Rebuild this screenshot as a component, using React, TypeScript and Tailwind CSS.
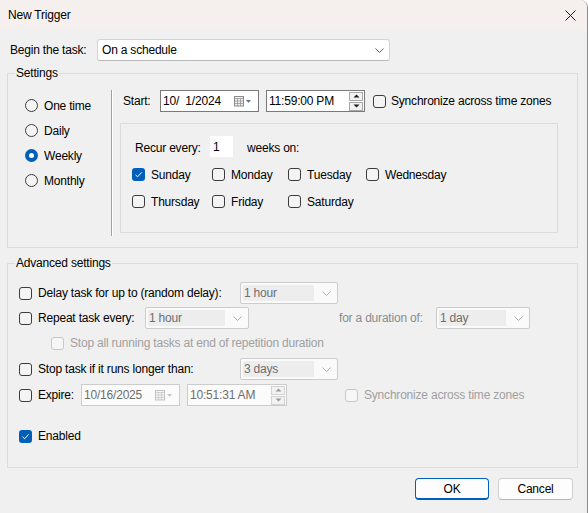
import React from 'react';

function Check({ checked = false, disabled = false }: { checked?: boolean; disabled?: boolean }) {
  if (checked) {
    return (
      <span className="w-[13px] h-[13px] rounded-[3px] bg-[#005fb8] flex items-center justify-center shrink-0">
        <svg width="13" height="13" viewBox="0 0 13 13">
          <path d="M3.5 6.8 L5.6 8.8 L9.6 4.4" fill="none" stroke="#ffffff" strokeWidth="1" />
        </svg>
      </span>
    );
  }
  return (
    <span
      className={
        disabled
          ? 'w-[13px] h-[13px] rounded-[3px] border border-[#c8c8c8] bg-[#f6f6f6] shrink-0'
          : 'w-[13px] h-[13px] rounded-[3px] border border-[#3c3c3c] bg-[#f4f4f4] shrink-0'
      }
    />
  );
}

function Radio({ checked = false }: { checked?: boolean }) {
  if (checked) {
    return (
      <span className="w-[13px] h-[13px] rounded-full bg-[#005fb8] flex items-center justify-center shrink-0">
        <span className="w-[5px] h-[5px] rounded-full bg-white" />
      </span>
    );
  }
  return <span className="w-[13px] h-[13px] rounded-full border border-[#3c3c3c] bg-[#f4f4f4] shrink-0" />;
}

function Chevron({ color }: { color: string }) {
  return (
    <svg width="9" height="5" viewBox="0 0 9 5" className="shrink-0">
      <path d="M0.5 0.5 L4.5 4.5 L8.5 0.5" fill="none" stroke={color} strokeWidth="1" />
    </svg>
  );
}

function OffCombo({ value, w }: { value: string; w: string }) {
  return (
    <div className={`${w} h-[22px] border border-[#cccccc] rounded-[2px] bg-[#fafafa] flex items-center p-[2px] gap-[8px]`}>
      <span className="flex-1 h-full bg-[#ededed] text-[#6e6e6e] pl-[1px] flex items-center">{value}</span>
      <span className="pr-[4px]">
        <Chevron color="#b0b0b0" />
      </span>
    </div>
  );
}

function CalIcon({ off = false }: { off?: boolean }) {
  const c = off ? '#c4c4c4' : '#8a8a8a';
  return (
    <svg width="20" height="11" viewBox="0 0 20 11" className="shrink-0">
      <rect x="0.5" y="0.5" width="9" height="9.5" fill={off ? '#f4f4f4' : '#f2f2f2'} stroke={c} />
      <path d="M0.5 2.5 H9.5 M3.5 2.5 V10 M6.5 2.5 V10 M0.5 5 H9.5 M0.5 7.5 H9.5" stroke={c} strokeWidth="0.7" />
      <path d="M12 4 H17 L14.5 6.8 Z" fill={off ? '#c4c4c4' : '#5a6f8a'} />
    </svg>
  );
}

function Spin({ off = false }: { off?: boolean }) {
  const b = off ? 'border-[#d2d2d2]' : 'border-[#a8a8a8]';
  const t = off ? '#9a9a9a' : '#1a1a1a';
  return (
    <div className="flex flex-col gap-[1px] shrink-0">
      <span className={`w-[14px] h-[9px] border ${b} bg-[#f2f2f2] flex items-center justify-center`}>
        <svg width="7" height="4" viewBox="0 0 7 4">
          <path d="M0.5 3.5 L3.5 0.5 L6.5 3.5 Z" fill={t} />
        </svg>
      </span>
      <span className={`w-[14px] h-[9px] border ${b} bg-[#f2f2f2] flex items-center justify-center`}>
        <svg width="7" height="4" viewBox="0 0 7 4">
          <path d="M0.5 0.5 L3.5 3.5 L6.5 0.5 Z" fill={t} />
        </svg>
      </span>
    </div>
  );
}

export default function App() {
  return (
    <div className="w-[588px] h-[513px] bg-[#f0f0f0] flex flex-col font-['Liberation_Sans',Arial,sans-serif] text-[12px] leading-[16px] tracking-[-0.2px] text-black overflow-hidden rounded-tr-[8px] border-r border-[#8a8a8a]">
      {/* title bar */}
      <div className="h-[30px] bg-[#f5f0ee] flex items-center justify-between pl-[8px] pr-[11px] shrink-0">
        <span className="text-[12px]">New Trigger</span>
        <svg width="11" height="11" viewBox="0 0 11 11">
          <path d="M0.5 0.5 L10.5 10.5 M10.5 0.5 L0.5 10.5" stroke="#1a1a1a" strokeWidth="1" />
        </svg>
      </div>

      <div className="pl-[7px] pr-[9px] flex flex-col">
        {/* begin the task */}
        <div className="mt-[9px] h-[22px] flex items-center pl-[3px]">
          <span className="w-[87px]">Begin the task:</span>
          <div className="w-[293px] h-[22px] bg-white border border-[#d4d4d4] border-b-[#b8b8b8] rounded-[3px] flex items-center justify-between pl-[4px] pr-[5px]">
            <span>On a schedule</span>
            <Chevron color="#606060" />
          </div>
        </div>

        {/* Settings */}
        <fieldset className="mt-[4px] border border-[#dcdcdc] min-w-0">
          <legend className="ml-[7px] px-[1px] leading-[16px]">Settings</legend>
          <div className="flex pt-[9px] pb-[11px]">
            <div className="w-[103px] flex flex-col pt-[3px] pl-[17px]">
              <label className="h-[25px] flex items-center gap-[6px]">
                <Radio />
                <span>One time</span>
              </label>
              <label className="h-[25px] flex items-center gap-[6px]">
                <Radio />
                <span>Daily</span>
              </label>
              <label className="h-[25px] flex items-center gap-[6px]">
                <Radio checked />
                <span>Weekly</span>
              </label>
              <label className="h-[25px] flex items-center gap-[6px]">
                <Radio />
                <span>Monthly</span>
              </label>
            </div>
            <div className="w-[2px] border-l border-[#a0a0a0] bg-white" />
            <div className="flex flex-col pl-[7px] pb-[3px]">
              <div className="h-[22px] flex items-center pl-[3px]">
                <span className="w-[37px]">Start:</span>
                <div className="w-[99px] h-[22px] bg-white border border-[#7a7a7a] flex items-center justify-between pl-[2px] pr-[4px]">
                  <span>10/&nbsp;&nbsp;1/2024</span>
                  <CalIcon />
                </div>
                <div className="ml-[7px] w-[99px] h-[22px] bg-white border border-[#7a7a7a] flex items-center justify-between pl-[2px] pr-[1px]">
                  <span>11:59:00 PM</span>
                  <Spin />
                </div>
                <label className="ml-[8px] flex items-center gap-[5px]">
                  <Check />
                  <span>Synchronize across time zones</span>
                </label>
              </div>

              <div className="mt-[11px] w-[438px] h-[110px] border border-[#dcdcdc] flex flex-col">
                <div className="mt-[12px] pl-[14px] h-[21px] flex items-center">
                  <span className="w-[75px] pt-[3px]">Recur every:</span>
                  <span className="w-[23px] h-[21px] bg-white pl-[3px] flex items-center">1</span>
                  <span className="ml-[14px] pt-[3px]">weeks on:</span>
                </div>
                <div className="mt-[4px] pl-[11px] grid grid-cols-[80px_76px_78px_1fr]">
                  <label className="h-[27px] flex items-center gap-[6px]">
                    <Check checked />
                    <span>Sunday</span>
                  </label>
                  <label className="h-[27px] flex items-center gap-[6px]">
                    <Check />
                    <span>Monday</span>
                  </label>
                  <label className="h-[27px] flex items-center gap-[6px]">
                    <Check />
                    <span>Tuesday</span>
                  </label>
                  <label className="h-[27px] flex items-center gap-[6px]">
                    <Check />
                    <span>Wednesday</span>
                  </label>
                  <label className="h-[27px] flex items-center gap-[6px]">
                    <Check />
                    <span>Thursday</span>
                  </label>
                  <label className="h-[27px] flex items-center gap-[6px]">
                    <Check />
                    <span>Friday</span>
                  </label>
                  <label className="h-[27px] flex items-center gap-[6px]">
                    <Check />
                    <span>Saturday</span>
                  </label>
                </div>
              </div>
            </div>
          </div>
        </fieldset>

        {/* Advanced settings */}
        <fieldset className="mt-[7px] border border-[#dcdcdc] min-w-0">
          <legend className="ml-[7px] px-[1px] leading-[16px]">Advanced settings</legend>
          <div className="flex flex-col pt-[11px] pl-[11px] pb-[20px]">
            <div className="h-[22px] flex items-center">
              <Check />
              <span className="ml-[6px] w-[202px]">Delay task for up to (random delay):</span>
              <OffCombo value="1 hour" w="w-[98px]" />
            </div>
            <div className="mt-[3px] h-[22px] flex items-center">
              <Check />
              <span className="ml-[6px] w-[107px]">Repeat task every:</span>
              <OffCombo value="1 hour" w="w-[104px]" />
              <span className="ml-[90px] w-[97px] text-[#8c8c8c]">for a duration of:</span>
              <OffCombo value="1 day" w="w-[94px]" />
            </div>
            <div className="mt-[3px] h-[22px] flex items-center pl-[32px]">
              <Check disabled />
              <span className="ml-[6px] text-[#a0a0a0]">Stop all running tasks at end of repetition duration</span>
            </div>
            <div className="mt-[4px] h-[22px] flex items-center">
              <Check />
              <span className="ml-[6px] w-[202px]">Stop task if it runs longer than:</span>
              <OffCombo value="3 days" w="w-[98px]" />
            </div>
            <div className="mt-[4px] h-[22px] flex items-center">
              <Check />
              <span className="ml-[6px] w-[43px]">Expire:</span>
              <div className="w-[99px] h-[22px] bg-[#fbfbfb] border border-[#cccccc] flex items-center justify-between pl-[2px] pr-[4px]">
                <span className="text-[#6e6e6e]">10/16/2025</span>
                <CalIcon off />
              </div>
              <div className="ml-[7px] w-[100px] h-[22px] bg-[#fbfbfb] border border-[#cccccc] flex items-center justify-between pl-[2px] pr-[1px]">
                <span className="text-[#6e6e6e]">10:51:31 AM</span>
                <Spin off />
              </div>
              <label className="ml-[58px] flex items-center gap-[6px]">
                <Check disabled />
                <span className="text-[#a0a0a0]">Synchronize across time zones</span>
              </label>
            </div>
            <div className="mt-[19px] h-[22px] flex items-center">
              <Check checked />
              <span className="ml-[6px]">Enabled</span>
            </div>
          </div>
        </fieldset>

        {/* buttons */}
        <div className="mt-[10px] flex justify-end gap-[9px] pr-[5px]">
          <button className="w-[74px] h-[22px] rounded-[4px] bg-[#fdfdfd] border border-[#005fb8] border-b-[2px] text-center">
            OK
          </button>
          <button className="w-[75px] h-[22px] rounded-[4px] bg-[#fdfdfd] border border-[#d0d0d0] border-b-[#b4b4b4] text-center">
            Cancel
          </button>
        </div>
      </div>
    </div>
  );
}
